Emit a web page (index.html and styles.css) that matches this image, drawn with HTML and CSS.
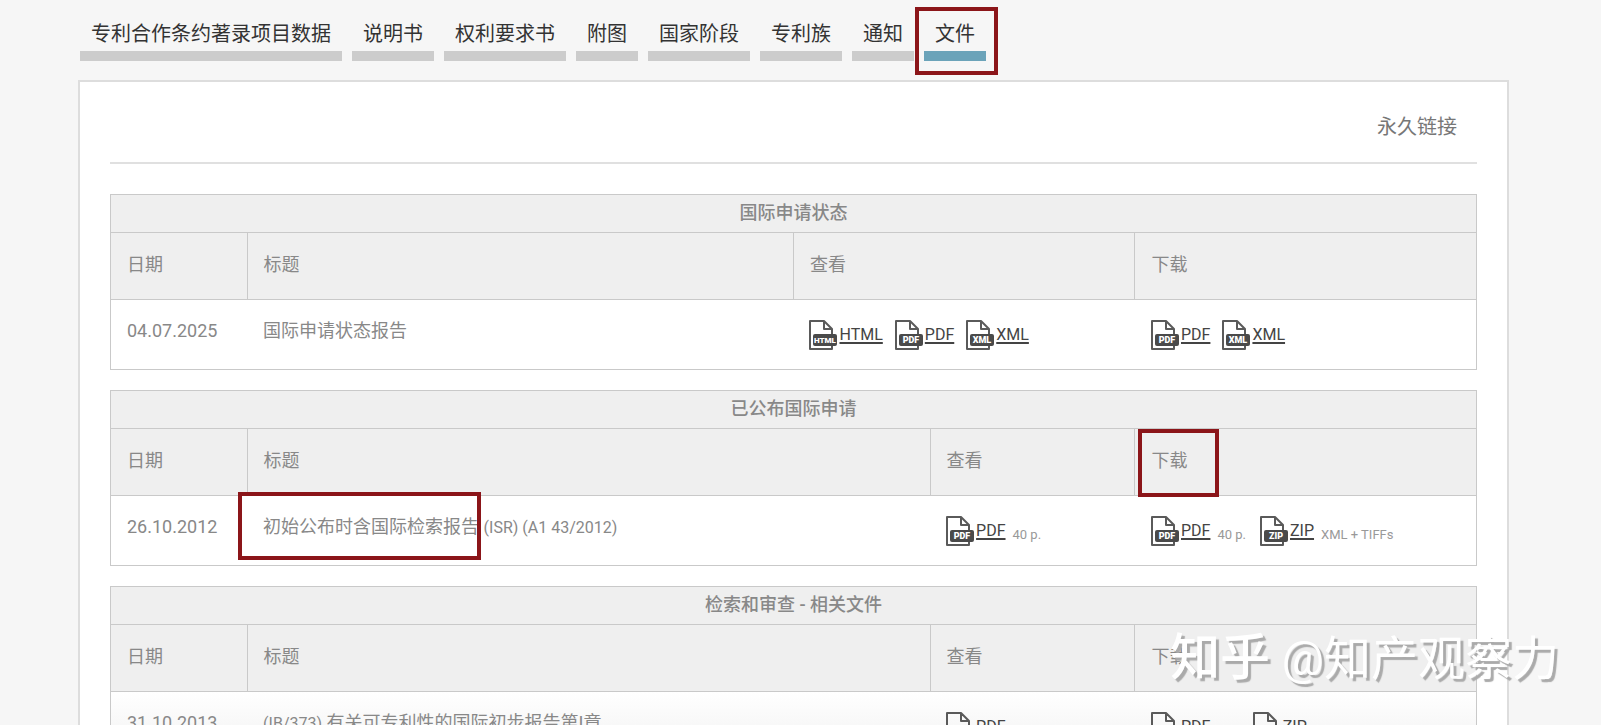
FILE: index.html
```html
<!DOCTYPE html>
<html lang="zh-CN">
<head>
    <meta charset="UTF-8">
    <title>文件</title>
    <link rel="stylesheet" href="styles.css">
</head>
<body>
    <svg class="defs">
        <symbol id="page" viewBox="0 0 28 30">
            <path d="M1 1h14l8 8v20H1z M15 1v8h8" fill="none" stroke="#5a5a5a" stroke-width="2" stroke-linejoin="round"/>
            <rect x="4" y="14" width="24" height="12" rx="2" fill="#4a4a4a"/>
        </symbol>
    </svg>

    <ul class="tabs">
        <li><a href="#">专利合作条约著录项目数据</a></li>
        <li><a href="#">说明书</a></li>
        <li><a href="#">权利要求书</a></li>
        <li><a href="#">附图</a></li>
        <li><a href="#">国家阶段</a></li>
        <li><a href="#">专利族</a></li>
        <li><a href="#">通知</a></li>
        <li class="select"><a href="#">文件</a><span class="mark mark-tab"></span></li>
    </ul>

    <div class="panel">
        <div class="top">
            <a href="#">永久链接</a>
        </div>

        <table class="docs">
            <colgroup><col class="w10"><col class="w40"><col class="w25"><col class="w25"></colgroup>
            <thead>
                <tr class="caption"><th colspan="4">国际申请状态</th></tr>
                <tr class="head"><th>日期</th><th>标题</th><th>查看</th><th>下载</th></tr>
            </thead>
            <tbody>
                <tr>
                    <td>04.07.2025</td>
                    <td>国际申请状态报告</td>
                    <td>
                        <div class="files">
                            <a href="#"><svg class="icon"><use href="#page"/><text x="16" y="23" class="small">HTML</text></svg><span>HTML</span></a>
                            <a href="#"><svg class="icon"><use href="#page"/><text x="16" y="23">PDF</text></svg><span>PDF</span></a>
                            <a href="#"><svg class="icon"><use href="#page"/><text x="16" y="23">XML</text></svg><span>XML</span></a>
                        </div>
                    </td>
                    <td>
                        <div class="files">
                            <a href="#"><svg class="icon"><use href="#page"/><text x="16" y="23">PDF</text></svg><span>PDF</span></a>
                            <a href="#"><svg class="icon"><use href="#page"/><text x="16" y="23">XML</text></svg><span>XML</span></a>
                        </div>
                    </td>
                </tr>
            </tbody>
        </table>

        <table class="docs">
            <colgroup><col class="w10"><col class="w50"><col class="w15"><col class="w25"></colgroup>
            <thead>
                <tr class="caption"><th colspan="4">已公布国际申请</th></tr>
                <tr class="head"><th>日期</th><th>标题</th><th>查看</th><th>下载<span class="mark mark-head"></span></th></tr>
            </thead>
            <tbody>
                <tr>
                    <td>26.10.2012</td>
                    <td>初始公布时含国际检索报告 <span class="code">(ISR) (A1 43/2012)</span><span class="mark mark-title"></span></td>
                    <td>
                        <div class="files">
                            <a href="#"><svg class="icon"><use href="#page"/><text x="16" y="23">PDF</text></svg><span>PDF</span></a>
                            <small>40 p.</small>
                        </div>
                    </td>
                    <td>
                        <div class="files">
                            <a href="#"><svg class="icon"><use href="#page"/><text x="16" y="23">PDF</text></svg><span>PDF</span></a>
                            <small>40 p.</small>
                            <a href="#"><svg class="icon"><use href="#page"/><text x="16" y="23">ZIP</text></svg><span>ZIP</span></a>
                            <small>XML + TIFFs</small>
                        </div>
                    </td>
                </tr>
            </tbody>
        </table>

        <table class="docs">
            <colgroup><col class="w10"><col class="w50"><col class="w15"><col class="w25"></colgroup>
            <thead>
                <tr class="caption"><th colspan="4">检索和审查 - 相关文件</th></tr>
                <tr class="head"><th>日期</th><th>标题</th><th>查看</th><th>下载</th></tr>
            </thead>
            <tbody>
                <tr class="fade">
                    <td>31.10.2013</td>
                    <td><span class="code">(IB/373)</span> 有关可专利性的国际初步报告第I章</td>
                    <td>
                        <div class="files">
                            <a href="#"><svg class="icon"><use href="#page"/><text x="16" y="23">PDF</text></svg><span>PDF</span></a>
                            <small>5 p.</small>
                        </div>
                    </td>
                    <td>
                        <div class="files">
                            <a href="#"><svg class="icon"><use href="#page"/><text x="16" y="23">PDF</text></svg><span>PDF</span></a>
                            <small>5 p.</small>
                            <a href="#"><svg class="icon"><use href="#page"/><text x="16" y="23">ZIP</text></svg><span>ZIP</span></a>
                        </div>
                    </td>
                </tr>
            </tbody>
        </table>
    </div>

    <div class="watermark"><b>知乎</b> @知产观察力</div>
</body>
</html>
```

FILE: styles.css
```css
*{
    margin: 0;
    padding: 0;
    box-sizing: border-box;
}
body{
    height: 100vh;
    overflow: hidden;
    padding: 18px 92px 0 78px;
    background: #f6f6f6;
    color: #888;
    font-family: Roboto, "Noto Sans CJK SC", sans-serif;
    font-size: 18px;
}
li{
    list-style: none;
}
.defs{
    display: none;
}
/* tabs */
.tabs{
    display: flex;
    gap: 10px;
    padding-left: 2px;
    margin-bottom: 19px;
}
.tabs li{
    position: relative;
}
.tabs a{
    display: block;
    height: 43px;
    padding: 0 11px;
    border-bottom: 10px solid #ccc;
    color: #333;
    font-size: 20px;
    line-height: 32px;
    text-decoration: none;
}
.tabs .select a{
    border-color: #6ba3b9;
}
/* content */
.panel{
    padding: 0 30px 30px;
    background: #fff;
    border: 2px solid #ddd;
}
.top{
    padding: 30px 20px 20px;
    margin-bottom: 30px;
    border-bottom: 2px solid #e0e0e0;
    text-align: right;
}
.top a{
    display: block;
    color: #777;
    font-size: 20px;
    line-height: 30px;
    text-decoration: none;
}
.docs{
    width: 100%;
    margin-bottom: 20px;
    table-layout: fixed;
    border-collapse: collapse;
    border: 1px solid #c9c9c9;
}
.w10{
    width: 10%;
}
.w15{
    width: 15%;
}
.w25{
    width: 25%;
}
.w40{
    width: 40%;
}
.w50{
    width: 50%;
}
.docs th{
    position: relative;
    padding: 0 16px 2px;
    background: #efefef;
    border: 1px solid #c9c9c9;
    font-weight: normal;
    line-height: 26px;
    text-align: left;
}
.docs .caption{
    height: 38px;
}
.docs .caption th{
    font-weight: 500;
    text-align: center;
}
.docs .head{
    height: 67px;
}
.docs td{
    position: relative;
    height: 70px;
    padding: 17px 16px;
    line-height: 28px;
    vertical-align: top;
}
.docs .fade{
    background: linear-gradient(#fff, #f0f0f0);
}
.code{
    font-size: 16px;
}
.files{
    display: flex;
    align-items: flex-end;
    height: 33px;
    white-space: nowrap;
}
.files a{
    display: flex;
    align-items: center;
    gap: 2px;
    margin-right: 12px;
    color: #444;
    font-size: 16px;
    line-height: 20px;
    text-decoration: none;
}
.files a span{
    text-decoration: underline 2px;
    text-underline-offset: 2px;
    text-decoration-skip-ink: none;
}
.files small{
    margin: 0 14px 0 -5px;
    color: #999;
    font-size: 13px;
    line-height: 22px;
}
.icon{
    width: 28px;
    height: 30px;
}
.icon text{
    fill: #fff;
    font-size: 9px;
    font-weight: 900;
    text-anchor: middle;
}
.icon .small{
    font-size: 8px;
}
/* red frames */
.mark{
    position: absolute;
    z-index: 1;
    border: 4px solid #8b1519;
}
.mark-tab{
    top: -11px;
    left: -9px;
    width: 83px;
    height: 68px;
}
.mark-head{
    top: 0;
    left: 3px;
    width: 81px;
    height: 68px;
}
.mark-title{
    top: -4px;
    left: -9px;
    width: 243px;
    height: 68px;
}
.watermark{
    position: fixed;
    right: 42px;
    bottom: 33px;
    color: #fff;
    font-size: 47px;
    line-height: 66px;
    text-shadow: 3px 3px 1px #aaa;
}
.watermark b{
    font-size: 50px;
    font-weight: 500;
}
```
